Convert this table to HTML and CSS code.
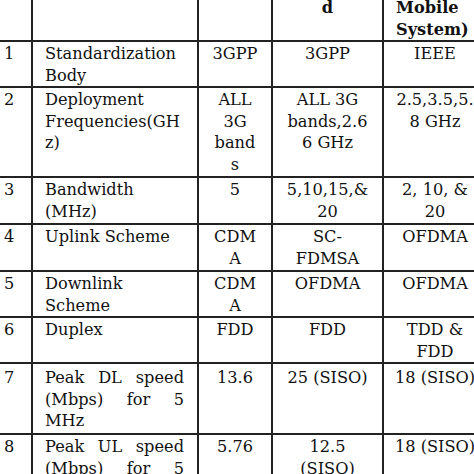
FILE: index.html
```html
<!DOCTYPE html>
<html>
<head>
<meta charset="utf-8">
<link rel="stylesheet" href="styles.css">
</head>
<body>
<div class="page">
<table class="spec">
<colgroup>
<col class="c1"><col class="c2"><col class="c3"><col class="c4"><col class="c5">
</colgroup>
<tr class="rh">
<td></td><td></td><td></td>
<td class="center head">d</td>
<td class="head left5">Mobile<br>System)</td>
</tr>
<tr class="r1">
<td class="num">1</td><td class="feat">Standardization<br>Body</td><td class="center">3GPP</td><td class="center">3GPP</td><td class="center">IEEE</td>
</tr>
<tr class="r2">
<td class="num">2</td><td class="feat">Deployment<br>Frequencies(GH<br>z)</td><td class="center">ALL<br>3G<br>band<br>s</td><td class="center">ALL 3G<br>bands,2.6<br>6 GHz</td><td class="center">2.5,3.5,5.<br>8 GHz</td>
</tr>
<tr class="r3">
<td class="num">3</td><td class="feat">Bandwidth<br>(MHz)</td><td class="center">5</td><td class="center">5,10,15,&amp;<br>20</td><td class="center">2, 10, &amp;<br>20</td>
</tr>
<tr class="r4">
<td class="num">4</td><td class="feat">Uplink Scheme</td><td class="center">CDM<br>A</td><td class="center">SC-<br>FDMSA</td><td class="center">OFDMA</td>
</tr>
<tr class="r5">
<td class="num">5</td><td class="feat">Downlink<br>Scheme</td><td class="center">CDM<br>A</td><td class="center">OFDMA</td><td class="center">OFDMA</td>
</tr>
<tr class="r6">
<td class="num">6</td><td class="feat">Duplex</td><td class="center">FDD</td><td class="center">FDD</td><td class="center">TDD &amp;<br>FDD</td>
</tr>
<tr class="r7">
<td class="num">7</td><td class="feat"><span class="jl">Peak DL speed</span><span class="jl">(Mbps) for 5</span><span class="ln">MHz</span></td><td class="center">13.6</td><td class="center">25 (SISO)</td><td class="center">18 (SISO)</td>
</tr>
<tr class="r8">
<td class="num">8</td><td class="feat"><span class="jl">Peak UL speed</span><span class="jl">(Mbps) for 5</span></td><td class="center">5.76</td><td class="center">12.5<br>(SISO)</td><td class="center">18 (SISO)</td>
</tr>
</table>
</div>
</body>
</html>
```
FILE: styles.css
```css
html, body {
  margin: 0;
  padding: 0;
  background: #ffffff;
  overflow: hidden;
}
.page {
  width: 474px;
  height: 474px;
  overflow: hidden;
  background: #ffffff;
}
.spec {
  border-collapse: collapse;
  table-layout: fixed;
  width: 490px;
  margin-left: -4px;
  margin-top: -5px;
  font-family: "DejaVu Serif", "Liberation Serif", serif;
  font-size: 16.2px;
  line-height: 21.5px;
  color: #111111;
}
.c1 { width: 35px; }
.c2 { width: 166px; }
.c3 { width: 74px; }
.c4 { width: 111px; }
.c5 { width: 104px; }
.spec td {
  border: 2px solid #222222;
  vertical-align: top;
  padding: 1px 0 0 0;
  white-space: nowrap;
}
.spec td.num { padding-left: 6px; }
.spec td.feat { padding-left: 12px; padding-right: 13px; }
.spec td.center { text-align: center; }
.spec td.head { font-weight: bold; padding-top: 0; }
.spec td.left5 { padding-left: 12px; text-align: left; }
.rh { height: 45px; }
.r1 { height: 46px; }
.r2 { height: 90px; }
.r3 { height: 47px; }
.r4 { height: 47px; }
.r5 { height: 46px; }
.r6 { height: 45px; }
.r7 { height: 71px; }
.r7 td { padding-top: 3px; }
.r8 { height: 80px; }
.jl {
  display: block;
  text-align: justify;
  text-align-last: justify;
}
.ln { display: block; }
```
